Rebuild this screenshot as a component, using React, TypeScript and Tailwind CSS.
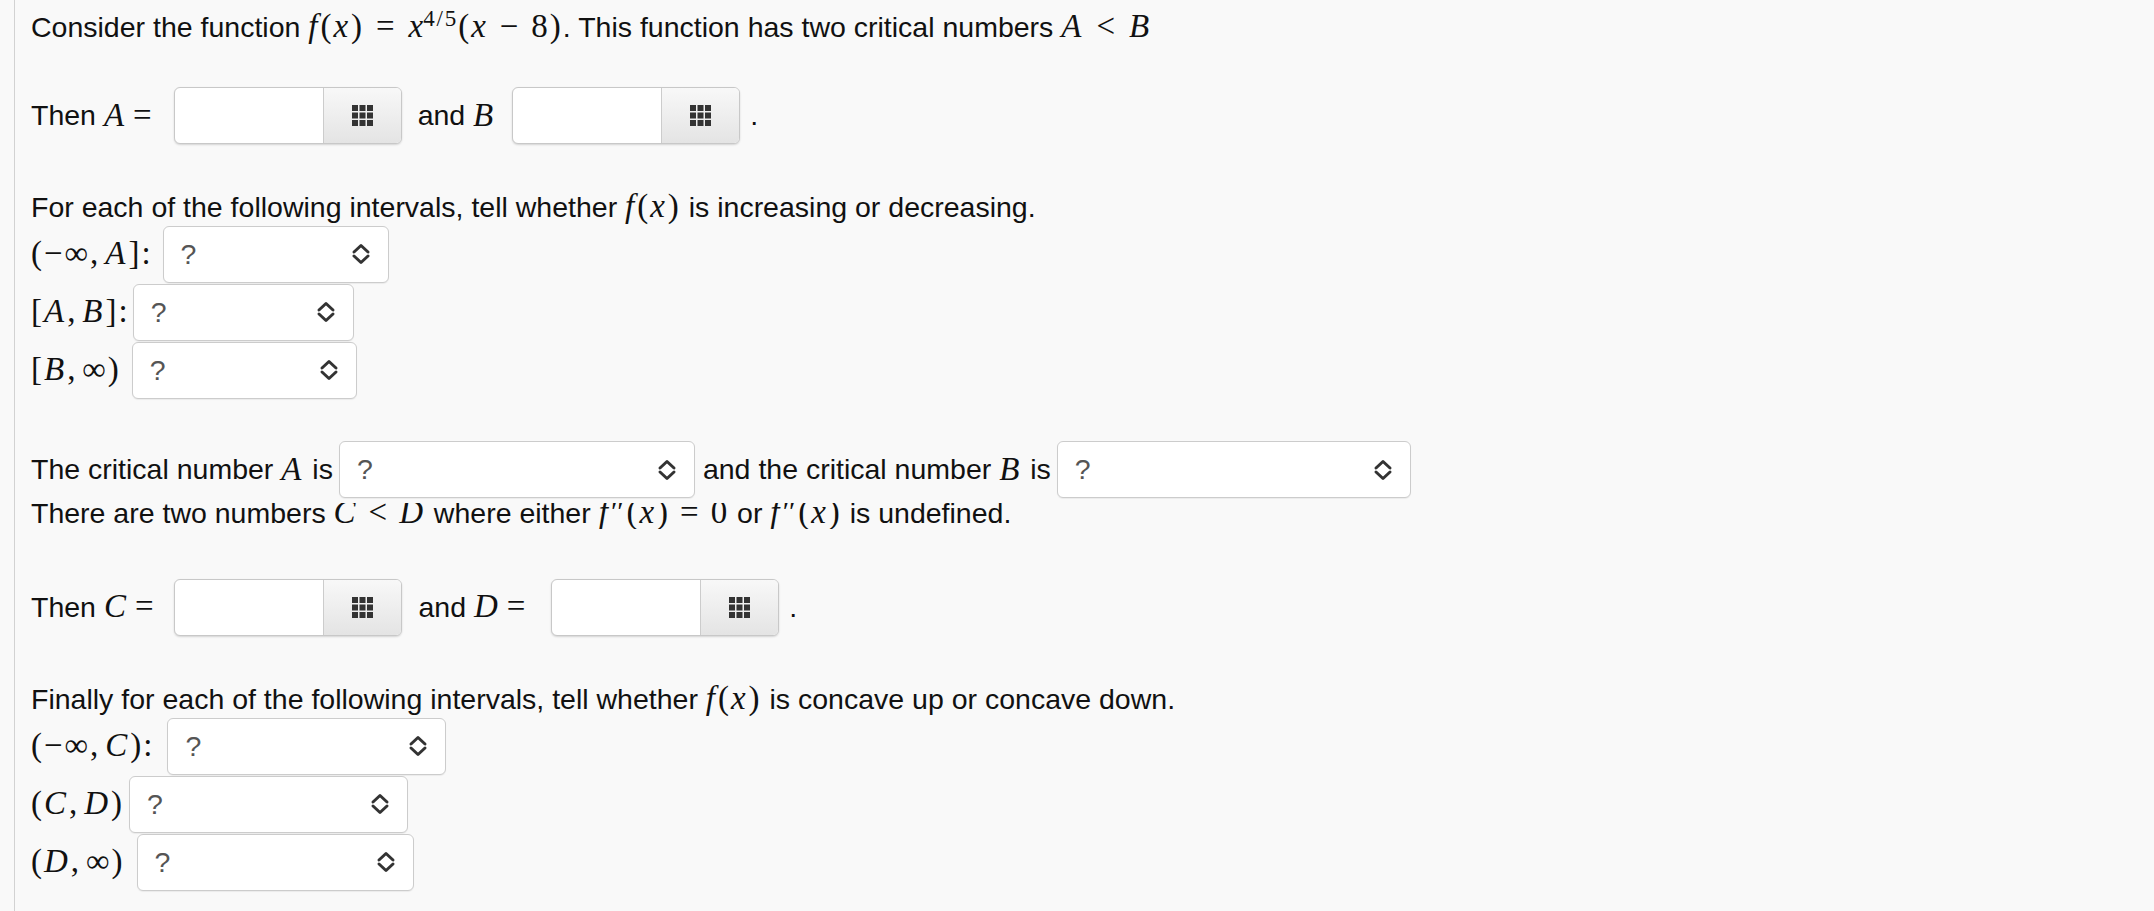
import React from "react";

function Mi({ children, className = "" }: { children: React.ReactNode; className?: string }) {
	return <span className={`font-['Liberation_Serif',serif] text-[33px] italic tracking-[0.09em] ${className}`}>{children}</span>;
}

function Mo({ children, className = "" }: { children: React.ReactNode; className?: string }) {
	return <span className={`font-['Liberation_Serif',serif] text-[33px] tracking-[0.06em] ${className}`}>{children}</span>;
}

function Chevrons() {
	return (
		<svg width="22" height="24" viewBox="0 0 22 24" fill="none" stroke="#333" strokeWidth="3" strokeLinecap="round" strokeLinejoin="round">
			<path d="M4 10 L11 3.5 L18 10" />
			<path d="M4 14 L11 20.5 L18 14" />
		</svg>
	);
}

function GridIcon() {
	return (
		<svg width="21" height="21" viewBox="0 0 21 21" fill="#333">
			{[0, 7.5, 15].map((y) =>
				[0, 7.5, 15].map((x) => <rect key={`${x}-${y}`} x={x} y={y} width="6" height="6" />)
			)}
		</svg>
	);
}

function Select({ className = "" }: { className?: string }) {
	return (
		<div
			className={`flex h-[57px] shrink-0 items-center justify-between rounded-[6px] border border-[#cccccc] bg-white pl-[17px] pr-[16px] shadow-[0_1px_1px_rgba(0,0,0,0.06)] ${className}`}
		>
			<span className="text-[#555]">?</span>
			<Chevrons />
		</div>
	);
}

function AnsInput({ className = "" }: { className?: string }) {
	return (
		<div
			className={`flex h-[57px] w-[228px] shrink-0 overflow-hidden rounded-[6px] border border-[#c8c8c8] bg-white shadow-[0_1px_2px_rgba(0,0,0,0.15)] ${className}`}
		>
			<div className="flex-1" />
			<div className="flex w-[78px] items-center justify-center border-l border-[#cccccc] bg-linear-to-b from-[#f8f8f8] to-[#e4e4e4]">
				<GridIcon />
			</div>
		</div>
	);
}

export default function App() {
	return (
		<div className="min-h-[911px] w-full bg-[#f9f9f9] font-['Liberation_Sans',Arial,sans-serif] text-[28.5px] text-[#111]">
			<div className="ml-[14px] min-h-[911px] border-l border-[#d2d2d2] pl-[16px] pt-[8px]">
				{/* critical numbers */}
				<p className="h-[36px] whitespace-nowrap leading-[36px]">
					Consider the function <Mi>f</Mi>
					<Mo>(</Mo>
					<Mi>x</Mi>
					<Mo>)</Mo>
					<Mo className="mx-[12px]">=</Mo>
					<Mi className="tracking-normal">x</Mi>
					<sup className="font-['Liberation_Serif',serif] text-[23px] tracking-[0.08em]">4/5</sup>
					<Mo>(</Mo>
					<Mi>x</Mi>
					<Mo className="mx-[11px]">−</Mo>
					<Mo className="tracking-[0.1em]">8)</Mo>. This function has two critical numbers <Mi>A</Mi>
					<Mo className="mx-[12px]">&lt;</Mo>
					<Mi>B</Mi>
				</p>

				<div className="mt-[43px] flex h-[57px] items-center whitespace-nowrap">
					<span>Then&nbsp;</span>
					<Mi>A</Mi>
					<Mo className="ml-[6px]">=</Mo>
					<AnsInput className="ml-[20px]" />
					<span className="ml-[16px]">and&nbsp;</span>
					<Mi>B</Mi>
					<AnsInput className="ml-[16px]" />
					<span className="ml-[10px]">.</span>
				</div>

				{/* increasing / decreasing */}
				<p className="mt-[44px] h-[36px] whitespace-nowrap leading-[36px]">
					For each of the following intervals, tell whether <Mi>f</Mi>
					<Mo>(</Mo>
					<Mi>x</Mi>
					<Mo>)</Mo> is increasing or decreasing.
				</p>
				<div className="mt-[1px] flex h-[58px] items-center whitespace-nowrap">
					<Mo>(−∞,</Mo>
					<Mi className="ml-[5px]">A</Mi>
					<Mo>]:</Mo>
					<Select className="ml-[10px] w-[226px]" />
				</div>
				<div className="flex h-[58px] items-center whitespace-nowrap">
					<Mo>[</Mo>
					<Mi>A</Mi>
					<Mo>,</Mo>
					<Mi className="ml-[5px]">B</Mi>
					<Mo>]:</Mo>
					<Select className="ml-[3px] w-[221px]" />
				</div>
				<div className="flex h-[58px] items-center whitespace-nowrap">
					<Mo>[</Mo>
					<Mi>B</Mi>
					<Mo>,</Mo>
					<Mo className="ml-[5px]">∞)</Mo>
					<Select className="ml-[11px] w-[225px]" />
				</div>

				<div className="mt-[42px] flex h-[57px] items-center whitespace-nowrap">
					<span>The critical number&nbsp;</span>
					<Mi>A</Mi>
					<span>&nbsp;is</span>
					<Select className="ml-[6px] w-[356px]" />
					<span className="ml-[8px]">and the critical number&nbsp;</span>
					<Mi>B</Mi>
					<span>&nbsp;is</span>
					<Select className="ml-[6px] w-[354px]" />
				</div>

				<div className="mt-[5px] h-[26px] overflow-hidden whitespace-nowrap">
					<div className="-mt-[6px] leading-[30px]">
						There are two numbers <Mi>C</Mi>
						<Mo className="mx-[10px]">&lt;</Mo>
						<Mi>D</Mi> where either <Mi>f</Mi>
						<Mo>″(</Mo>
						<Mi>x</Mi>
						<Mo>)</Mo>
						<Mo className="mx-[10px]">=</Mo>
						<Mo>0</Mo> or <Mi>f</Mi>
						<Mo>″(</Mo>
						<Mi>x</Mi>
						<Mo>)</Mo> is undefined.
					</div>
				</div>

				<div className="mt-[49px] flex h-[58px] items-center whitespace-nowrap">
					<span>Then&nbsp;</span>
					<Mi>C</Mi>
					<Mo className="ml-[6px]">=</Mo>
					<AnsInput className="ml-[19px]" />
					<span className="ml-[16px]">and&nbsp;</span>
					<Mi>D</Mi>
					<Mo className="ml-[6px]">=</Mo>
					<AnsInput className="ml-[24px]" />
					<span className="ml-[10px]">.</span>
				</div>

				{/* concavity */}
				<p className="mt-[44px] h-[36px] whitespace-nowrap leading-[36px]">
					Finally for each of the following intervals, tell whether <Mi>f</Mi>
					<Mo>(</Mo>
					<Mi>x</Mi>
					<Mo>)</Mo> is concave up or concave down.
				</p>
				<div className="mt-[1px] flex h-[58px] items-center whitespace-nowrap">
					<Mo>(−∞,</Mo>
					<Mi className="ml-[5px]">C</Mi>
					<Mo>):</Mo>
					<Select className="ml-[13px] w-[279px]" />
				</div>
				<div className="flex h-[58px] items-center whitespace-nowrap">
					<Mo>(</Mo>
					<Mi>C</Mi>
					<Mo>,</Mo>
					<Mi className="ml-[5px]">D</Mi>
					<Mo>)</Mo>
					<Select className="ml-[5px] w-[279px]" />
				</div>
				<div className="flex h-[58px] items-center whitespace-nowrap">
					<Mo>(</Mo>
					<Mi>D</Mi>
					<Mo>,</Mo>
					<Mo className="ml-[5px]">∞)</Mo>
					<Select className="ml-[12px] w-[277px]" />
				</div>
			</div>
		</div>
	);
}
